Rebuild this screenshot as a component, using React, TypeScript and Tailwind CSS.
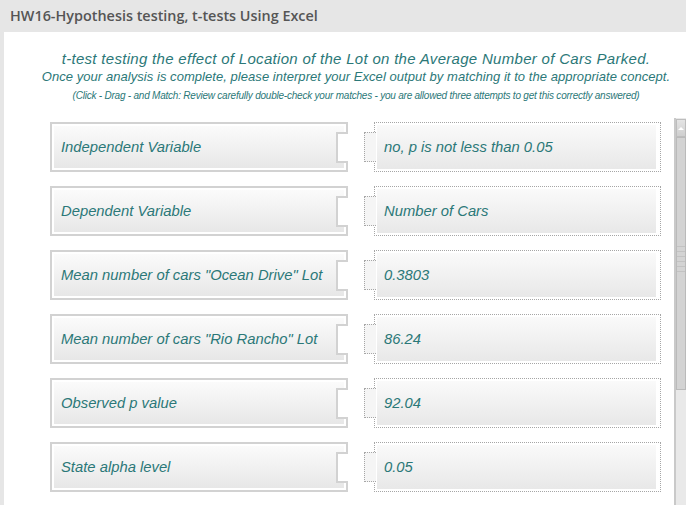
import React from "react";

const ROWS: [string, string][] = [
  ["Independent Variable", "no, p is not less than 0.05"],
  ["Dependent Variable", "Number of Cars"],
  ['Mean number of cars "Ocean Drive" Lot', "0.3803"],
  ['Mean number of cars "Rio Rancho" Lot', "86.24"],
  ["Observed p value", "92.04"],
  ["State alpha level", "0.05"],
];

const teal = "text-[#2b7878]";

function ConceptCard({ label }: { label: string }) {
  return (
    <div className="relative h-[50px] w-[298px] shrink-0 border-2 border-[#d2d2d2] bg-white p-[2px]">
      <div className={`flex h-full items-center bg-gradient-to-b from-[#fbfbfb] to-[#e7e7e7] pl-[7px] text-[14.8px] italic ${teal}`}>
        {label}
      </div>
      {/* notch on the right edge */}
      <div className="absolute right-[-2px] top-[8px] h-[31px] w-[12px] border-2 border-r-0 border-[#d2d2d2] bg-white" />
    </div>
  );
}

function AnswerCard({ value }: { value: string }) {
  return (
    <div className="relative ml-[26px] h-[50px] w-[287px] shrink-0 border border-dotted border-[#a6a6a6] bg-white p-[2px] pr-[4px]">
      <div className={`flex h-full items-center bg-gradient-to-b from-[#fafafa] to-[#e8e8e8] pl-[7px] text-[14.8px] italic ${teal}`}>
        {value}
      </div>
      {/* tab on the left edge */}
      <div className="absolute left-[-11px] top-[9px] h-[30px] w-[12px] border border-r-0 border-dotted border-[#a6a6a6] bg-[#f5f5f5]" />
    </div>
  );
}

function Scrollbar() {
  return (
    <div className="flex w-[12px] shrink-0 flex-col border-l-2 border-[#c9c9c9] bg-[#e9e9e9]">
      <div className="mt-px flex h-[18px] items-center justify-center border border-[#bdbdbd] bg-gradient-to-b from-[#e4e4e4] to-[#cfcfcf]">
        <div className="h-0 w-0 border-x-[3px] border-b-[3px] border-x-transparent border-b-white" />
      </div>
      <div className="relative h-[253px] border border-[#bababa] bg-[#d3d3d3]">
        <div className="absolute left-0 right-0 top-[108px] flex flex-col gap-[4px]">
          <div className="h-px bg-[#c2c2c2]" />
          <div className="h-px bg-[#c2c2c2]" />
          <div className="h-px bg-[#c2c2c2]" />
          <div className="h-px bg-[#c2c2c2]" />
          <div className="h-px bg-[#c2c2c2]" />
          <div className="h-px bg-[#c2c2c2]" />
        </div>
      </div>
    </div>
  );
}

export default function App() {
  return (
    <div
      className="flex h-[505px] w-[686px] flex-col overflow-hidden bg-[#e6e6e6]"
      style={{ fontFamily: '"Liberation Sans", Arial, sans-serif' }}
    >
      <div className="flex h-[32px] shrink-0 items-center px-[10px]">
        <h1
          className="text-[14.4px] font-semibold text-[#555555]"
          style={{ fontFamily: '"Open Sans", "Noto Sans", sans-serif' }}
        >
          HW16-Hypothesis testing, t-tests Using Excel
        </h1>
      </div>

      <div className="ml-[4px] flex flex-1 flex-col bg-white">
        <div className={`flex flex-col items-center pl-[22px] pt-[18px] italic ${teal}`}>
          <p className="whitespace-nowrap text-[15px] leading-[18px] tracking-[0.3px]">
            t-test testing the effect of Location of the Lot on the Average Number of Cars Parked.
          </p>
          <p className="mt-px whitespace-nowrap text-[13px] leading-[16px] tracking-[0.05px]">
            Once your analysis is complete, please interpret your Excel output by matching it to the appropriate concept.
          </p>
          <p className="mt-[4px] whitespace-nowrap text-[10px] leading-[13px] tracking-[-0.22px]">
            (Click - Drag - and Match: Review carefully double-check your matches - you are allowed three attempts to get this correctly answered)
          </p>
        </div>

        <div className="mt-[16px] flex flex-1">
          <div className="flex flex-1 flex-col gap-[14px] pl-[46px] pt-[4px]">
            {ROWS.map(([label, value]) => (
              <div key={label} className="flex">
                <ConceptCard label={label} />
                <AnswerCard value={value} />
              </div>
            ))}
          </div>
          <Scrollbar />
        </div>
      </div>
    </div>
  );
}
